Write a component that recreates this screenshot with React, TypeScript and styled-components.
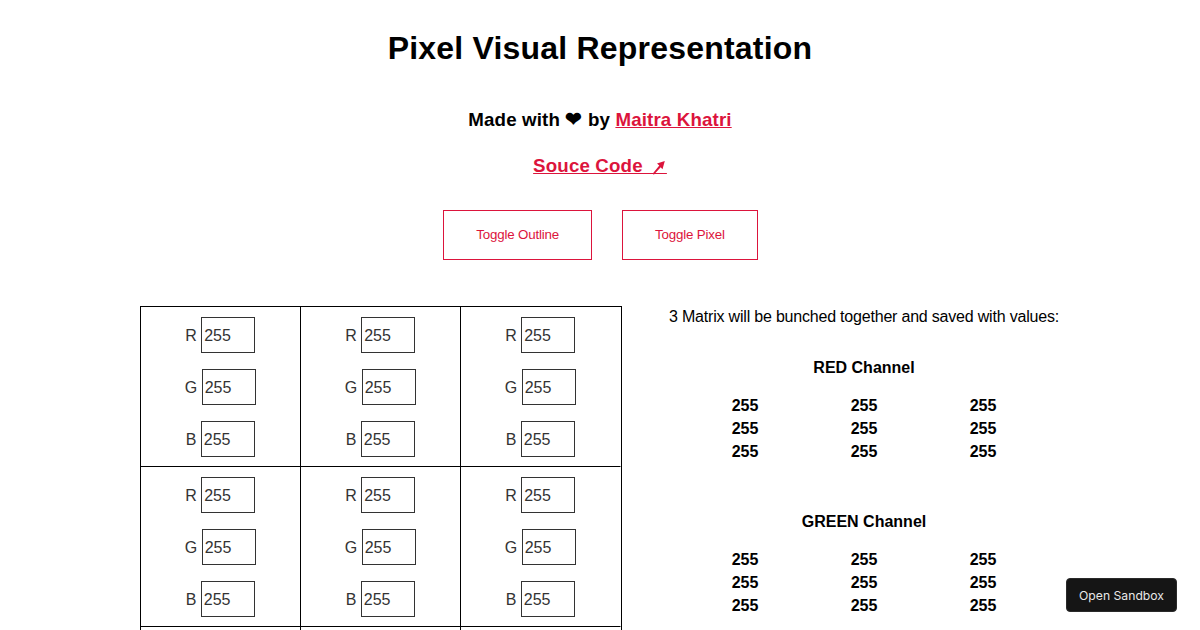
import styled, { createGlobalStyle } from "styled-components";

const GlobalStyle = createGlobalStyle`
  html, body {
    margin: 0;
    padding: 0;
    background: #fff;
    overflow: hidden;
    font-family: Helvetica, "Liberation Sans", Arial, sans-serif;
  }
`;

const channels = ["R", "G", "B"];
const matrix = [0, 1, 2, 3, 4, 5, 6, 7, 8];

const Pixel = () => (
  <Cell>
    {channels.map((c) => (
      <ChannelRow key={c}>
        {c} <ChannelInput type="text" defaultValue="255" />
      </ChannelRow>
    ))}
  </Cell>
);

const ChannelMatrix = ({ name }: { name: string }) => (
  <ChannelBlock>
    <ChannelTitle>{name} Channel</ChannelTitle>
    <Values>
      {matrix.map((i) => (
        <Value key={i}>255</Value>
      ))}
    </Values>
  </ChannelBlock>
);

export default function App() {
  return (
    <Page>
      <GlobalStyle />
      <Title>Pixel Visual Representation</Title>
      <Credit>
        Made with <Heart>❤</Heart> by <Link href="#">Maitra Khatri</Link>
      </Credit>
      <Credit>
        <Link href="#">
          Souce Code &nbsp;
          <ArrowSlot>
            &nbsp;&nbsp;&nbsp;
            <ArrowIcon viewBox="0 0 14 16" aria-hidden="true">
              <path d="M12.8 1 L5 3.4 L7.3 5.6 L0.8 13.6 L1.8 14.8 L8.7 7.3 L10.5 9.2 Z" />
            </ArrowIcon>
          </ArrowSlot>
        </Link>
      </Credit>
      <Buttons>
        <Button>Toggle Outline</Button>
        <Button>Toggle Pixel</Button>
      </Buttons>
      <Content>
        <Grid>
          {matrix.map((i) => (
            <Pixel key={i} />
          ))}
        </Grid>
        <Side>
          <Intro>3 Matrix will be bunched together and saved with values:</Intro>
          <ChannelMatrix name="RED" />
          <ChannelMatrix name="GREEN" />
        </Side>
      </Content>
      <SandboxButton>Open Sandbox</SandboxButton>
    </Page>
  );
}

const Page = styled.div`
  height: 630px;
  overflow: hidden;
  text-align: center;
  color: #000;
`;

const Title = styled.h1`
  margin: 0;
  padding-top: 30px;
  font-size: 32px;
  line-height: 37px;
  font-weight: 700;
  letter-spacing: 0.2px;
`;

const Credit = styled.h3`
  margin: 0;
  font-size: 18.72px;
  line-height: 22px;
  font-weight: 700;
  letter-spacing: 0.15px;
  padding-top: 24px;
  &:first-of-type {
    padding-top: 41px;
  }
`;

const Heart = styled.span`
  font-size: 20px;
`;

const ArrowSlot = styled.span`
  position: relative;
  letter-spacing: -0.7px;
`;

const ArrowIcon = styled.svg`
  position: absolute;
  left: -1px;
  top: 5px;
  width: 14px;
  height: 16px;
  fill: crimson;
`;

const Link = styled.a`
  color: crimson;
  text-decoration: underline;
`;

const Buttons = styled.div`
  display: flex;
  justify-content: center;
  gap: 30px;
  margin-top: 33px;
  padding-left: 1px;
`;

const Button = styled.button`
  height: 50px;
  padding: 0 32px 2px;
  background: #fff;
  border: 1px solid crimson;
  color: crimson;
  font-family: inherit;
  font-size: 13.33px;
  letter-spacing: -0.17px;
`;

const Content = styled.div`
  display: flex;
  align-items: flex-start;
  margin-top: 46px;
  padding-left: 140px;
`;

const Grid = styled.div`
  display: grid;
  grid-template-columns: repeat(3, 160px);
  grid-auto-rows: 160px;
  flex-shrink: 0;
  border: solid #000;
  border-width: 1px 1px 0 1px;
`;

const Cell = styled.div`
  display: flex;
  flex-direction: column;
  gap: 16px;
  box-sizing: border-box;
  height: 160px;
  padding: 10px 0.6px 0 0;
  border-right: 1px solid #000;
  border-bottom: 1px solid #000;
  &:nth-child(3n) {
    border-right-color: transparent;
  }
`;

const ChannelRow = styled.label`
  display: block;
  height: 36px;
  line-height: 38px;
  font-size: 16px;
  color: #333;
  text-align: center;
  white-space: nowrap;
`;

const ChannelInput = styled.input`
  box-sizing: border-box;
  width: 54px;
  height: 36px;
  padding: 2px 2px 0;
  border: 1px solid #333;
  border-radius: 0;
  outline: none;
  background: #fff;
  color: #333;
  font-family: inherit;
  font-size: 16px;
  vertical-align: top;
`;

const Side = styled.div`
  width: 484px;
  padding-top: 2px;
`;

const Intro = styled.p`
  margin: 0;
  font-size: 16px;
  line-height: 18px;
  letter-spacing: -0.2px;
`;

const ChannelBlock = styled.div`
  margin-top: 33px;
  padding-bottom: 17px;
`;

const ChannelTitle = styled.h4`
  margin: 0 0 17px;
  font-size: 16px;
  line-height: 18px;
  font-weight: 700;
`;

const Values = styled.div`
  display: grid;
  grid-template-columns: repeat(3, 119px);
  justify-content: center;
  grid-auto-rows: 23px;
`;

const Value = styled.span`
  font-size: 16px;
  line-height: 23px;
  font-weight: 700;
`;

const SandboxButton = styled.button`
  position: fixed;
  right: 23px;
  bottom: 18px;
  height: 34px;
  padding: 0 12px;
  border: 1px solid #2a2a2a;
  border-radius: 4px;
  background: #151515;
  color: #e8e8e8;
  font-family: Inter, sans-serif;
  font-size: 12.2px;
`;
